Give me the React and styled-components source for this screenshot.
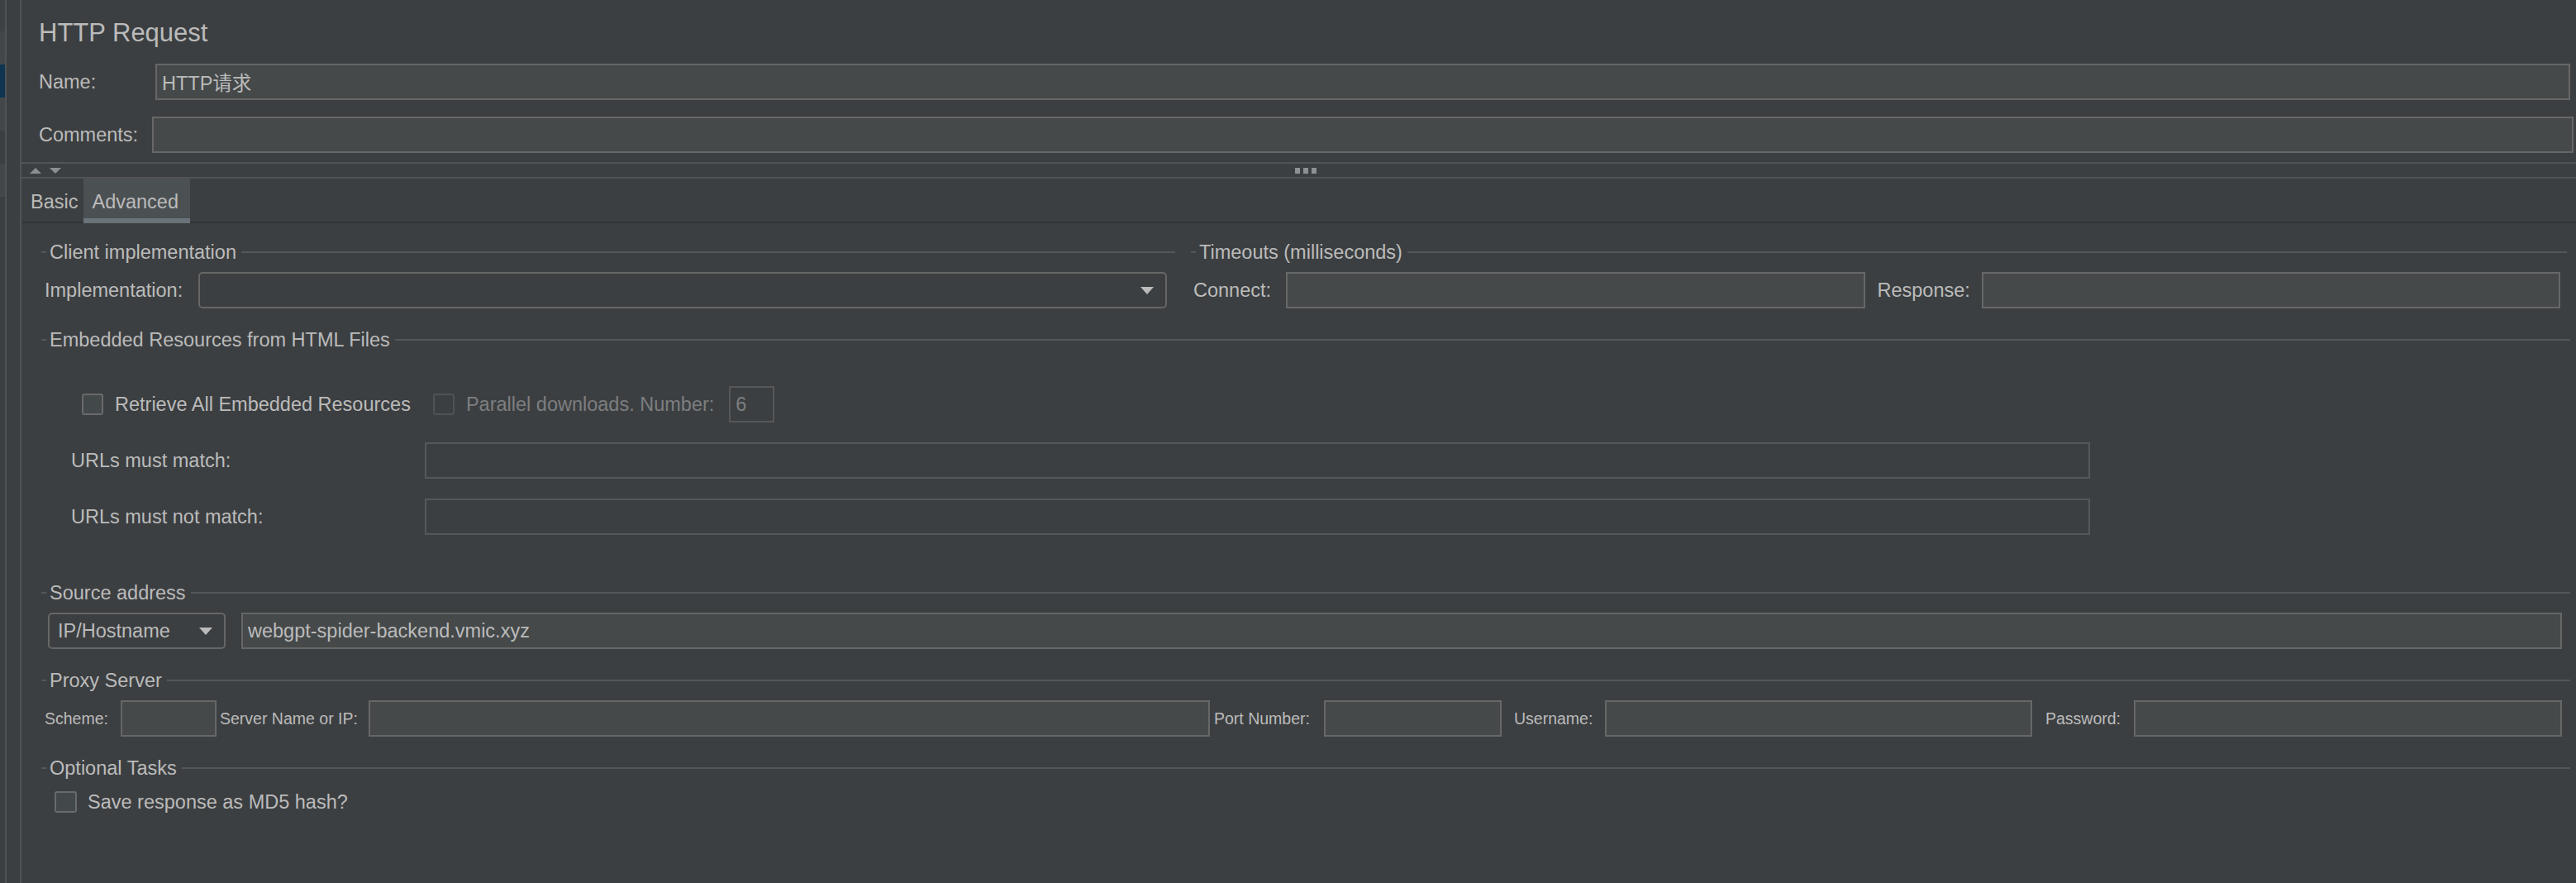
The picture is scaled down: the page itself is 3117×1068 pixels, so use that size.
import React from 'react';
import styled, { createGlobalStyle } from 'styled-components';

const GlobalStyle = createGlobalStyle`
  html, body {
    margin: 0;
    padding: 0;
    background: #3c3f41;
  }
  body {
    font-family: "Liberation Sans", Arial, "Noto Sans CJK SC", sans-serif;
    color: #bbbbbb;
  }
`;

const Frame = styled.div`
  display: flex;
  width: 100%;
  height: 1068px;
  overflow: hidden;
  background: #3c3f41;
`;

const TreeStrip = styled.div`
  width: 6px;
  display: flex;
  flex-direction: column;
  flex-shrink: 0;
`;

const TreeRow = styled.div`
  height: ${(p) => p.$h || 40}px;
  background: ${(p) => p.$tone};
`;

const StripLine = styled.div`
  width: 2px;
  background: #505254;
  flex-shrink: 0;
`;

const Gutter = styled.div`
  width: 16px;
  flex-shrink: 0;
`;

const Main = styled.div`
  flex: 1;
  display: flex;
  flex-direction: column;
  border-left: 2px solid #515355;
`;

const Header = styled.div`
  padding: 20px 0 0 21px;
`;

const Title = styled.div`
  font-size: 31px;
  line-height: 39px;
  color: #bbbbbb;
`;

const FieldRow = styled.div`
  display: flex;
  align-items: center;
  height: 44px;
  margin-top: ${(p) => p.$top}px;
  padding-left: 21px;
  padding-right: ${(p) => p.$right}px;
`;

const Label = styled.div`
  width: ${(p) => (p.$w ? `${p.$w}px` : 'auto')};
  margin-left: ${(p) => p.$ml || 0}px;
  flex-shrink: 0;
  font-size: ${(p) => (p.$small ? '19.5px' : '23.5px')};
  line-height: 44px;
  color: ${(p) => (p.$disabled ? '#7c7e80' : '#bbbbbb')};
  white-space: nowrap;
`;

const TextField = styled.div`
  box-sizing: border-box;
  height: 44px;
  flex: ${(p) => (p.$w ? 'none' : 1)};
  width: ${(p) => (p.$w ? `${p.$w}px` : 'auto')};
  margin-left: ${(p) => p.$ml || 0}px;
  display: flex;
  align-items: center;
  padding: 0 6px;
  font-size: 23.5px;
  color: ${(p) => (p.$disabled ? '#7c7e80' : '#bbbbbb')};
  background: ${(p) => (p.$disabled ? 'transparent' : '#45494a')};
  border: 2px solid ${(p) => (p.$disabled ? '#555759' : '#676767')};
  white-space: nowrap;
`;

const Combo = styled.div`
  box-sizing: border-box;
  height: 44px;
  flex: ${(p) => (p.$w ? 'none' : 1)};
  width: ${(p) => (p.$w ? `${p.$w}px` : 'auto')};
  display: flex;
  align-items: center;
  justify-content: space-between;
  padding: 0 14px 0 10px;
  border: 2px solid #666666;
  border-radius: 5px;
  font-size: 23.5px;
  color: #bbbbbb;
`;

const SplitBar = styled.div`
  margin-top: 11px;
  height: 16px;
  border-top: 2px solid #515355;
  border-bottom: 2px solid #515355;
  display: grid;
  grid-template-columns: 1fr auto 1fr;
  align-items: center;
`;

const SplitArrows = styled.div`
  display: flex;
  gap: 10px;
  padding-left: 10px;
`;

const SplitDots = styled.div`
  display: flex;
  gap: 4px;
  margin-left: 16px;
`;

const Dot = styled.span`
  width: 6px;
  height: 7px;
  background: #8e9193;
`;

const TabStrip = styled.div`
  height: 52px;
  display: flex;
  border-bottom: 2px solid #323436;
`;

const Tab = styled.div`
  box-sizing: border-box;
  height: 54px;
  padding: 4px ${(p) => (p.$active ? '14px' : '7px')} 0 ${(p) => (p.$active ? '10px' : '11px')};
  font-size: 23.5px;
  line-height: 48px;
  color: #bbbbbb;
  background: ${(p) => (p.$active ? '#4b5053' : 'transparent')};
  box-shadow: ${(p) => (p.$active ? 'inset 0 -6px 0 #6a7379' : 'none')};
`;

const Content = styled.div`
  padding: 0 7px 0 24px;
  display: flex;
  flex-direction: column;
`;

const GroupRow = styled.div`
  display: flex;
  gap: 19px;
  margin-top: ${(p) => p.$top}px;
`;

const Group = styled.div`
  display: flex;
  flex-direction: column;
  width: ${(p) => (p.$w ? `${p.$w}px` : 'auto')};
  flex: ${(p) => (p.$w ? 'none' : 1)};
  margin-top: ${(p) => p.$top || 0}px;
  margin-right: ${(p) => p.$mr || 0}px;
`;

const GroupHead = styled.div`
  display: flex;
  align-items: center;
  height: 24px;
`;

const Stub = styled.span`
  width: 6px;
  height: 2px;
  background: #545658;
`;

const GroupTitle = styled.span`
  padding: 0 6px 0 4px;
  font-size: 23.5px;
  line-height: 24px;
  color: #bbbbbb;
  white-space: nowrap;
`;

const Rule = styled.span`
  flex: 1;
  height: 2px;
  background: #545658;
`;

const GroupBody = styled.div`
  display: flex;
  align-items: center;
  height: ${(p) => p.$h || 44}px;
  margin-top: ${(p) => p.$top}px;
  padding-left: ${(p) => p.$left}px;
  padding-right: ${(p) => p.$right || 0}px;
`;

const Check = styled.span`
  box-sizing: border-box;
  width: ${(p) => p.$w || 26}px;
  height: 26px;
  flex-shrink: 0;
  margin-left: ${(p) => p.$ml || 0}px;
  border-radius: 3px;
  border: 2px solid ${(p) => (p.$disabled ? '#505254' : '#686a6c')};
  background: ${(p) => (p.$disabled ? 'transparent' : '#43494a')};
`;

const CheckLabel = styled(Label)`
  line-height: 26px;
`;

const Arrow = ({ up, color = '#8c8f91' }) => (
  <svg width="14" height="7" viewBox="0 0 14 7">
    {up ? (
      <polygon points="7,0 14,7 0,7" fill={color} />
    ) : (
      <polygon points="0,0 14,0 7,7" fill={color} />
    )}
  </svg>
);

const ComboArrow = () => (
  <svg width="16" height="9" viewBox="0 0 16 9">
    <polygon points="0,0 16,0 8,9" fill="#bbbbbb" />
  </svg>
);

const Section = ({ title, children, ...rest }) => (
  <Group {...rest}>
    <GroupHead>
      <Stub />
      <GroupTitle>{title}</GroupTitle>
      <Rule />
    </GroupHead>
    {children}
  </Group>
);

const treeRows = [
  [38, '#3e4143'],
  [40, '#44474a'],
  [40, '#0e3450'],
  [40, '#44474a'],
  [40, '#3c3f41'],
  [40, '#44474a'],
];

export default function App() {
  return (
    <>
      <GlobalStyle />
      <Frame>
        <TreeStrip>
          {treeRows.map(([h, tone], i) => (
            <TreeRow key={i} $h={h} $tone={tone} />
          ))}
        </TreeStrip>
        <StripLine />
        <Gutter />
        <Main>
          <Header>
            <Title>HTTP Request</Title>
          </Header>
          <FieldRow $top={18} $right={7}>
            <Label $w={141}>Name:</Label>
            <TextField>HTTP请求</TextField>
          </FieldRow>
          <FieldRow $top={20} $right={3}>
            <Label $w={137}>Comments:</Label>
            <TextField />
          </FieldRow>

          <SplitBar>
            <SplitArrows>
              <Arrow up />
              <Arrow />
            </SplitArrows>
            <SplitDots>
              <Dot />
              <Dot />
              <Dot />
            </SplitDots>
            <span />
          </SplitBar>

          <TabStrip>
            <Tab>Basic</Tab>
            <Tab $active>Advanced</Tab>
          </TabStrip>

          <Content>
            <GroupRow $top={23}>
              <Section title="Client implementation" $w={1372}>
                <GroupBody $top={12} $left={4} $right={10}>
                  <Label $w={186}>Implementation:</Label>
                  <Combo>
                    <span />
                    <ComboArrow />
                  </Combo>
                </GroupBody>
              </Section>
              <Section title="Timeouts (milliseconds)" $mr={4}>
                <GroupBody $top={12} $left={3} $right={8}>
                  <Label $w={112}>Connect:</Label>
                  <TextField />
                  <Label $w={126} $ml={15}>Response:</Label>
                  <TextField />
                </GroupBody>
              </Section>
            </GroupRow>

            <Section title="Embedded Resources from HTML Files" $top={26}>
              <GroupBody $top={44} $left={49}>
                <Check />
                <Label $ml={14}>Retrieve All Embedded Resources</Label>
                <Check $disabled $ml={27} />
                <Label $ml={14} $disabled>Parallel downloads. Number:</Label>
                <TextField $w={55} $ml={18} $disabled>6</TextField>
              </GroupBody>
              <GroupBody $top={24} $left={36}>
                <Label $w={428}>URLs must match:</Label>
                <TextField $w={2015} $disabled />
              </GroupBody>
              <GroupBody $top={24} $left={36}>
                <Label $w={428}>URLs must not match:</Label>
                <TextField $w={2015} $disabled />
              </GroupBody>
            </Section>

            <Section title="Source address" $top={58}>
              <GroupBody $top={12} $left={8} $right={10}>
                <Combo $w={215}>
                  <span>IP/Hostname</span>
                  <ComboArrow />
                </Combo>
                <TextField $ml={19}>webgpt-spider-backend.vmic.xyz</TextField>
              </GroupBody>
            </Section>

            <Section title="Proxy Server" $top={26}>
              <GroupBody $top={12} $left={4} $right={10}>
                <Label $small $w={92}>Scheme:</Label>
                <TextField $w={116} />
                <Label $small $w={180} $ml={4}>Server Name or IP:</Label>
                <TextField $w={1018} />
                <Label $small $w={133} $ml={5}>Port Number:</Label>
                <TextField $w={215} />
                <Label $small $w={110} $ml={15}>Username:</Label>
                <TextField $w={517} />
                <Label $small $w={107} $ml={16}>Password:</Label>
                <TextField />
              </GroupBody>
            </Section>

            <Section title="Optional Tasks" $top={26}>
              <GroupBody $top={16} $left={16} $h={26}>
                <Check $w={27} />
                <CheckLabel $ml={13}>Save response as MD5 hash?</CheckLabel>
              </GroupBody>
            </Section>
          </Content>
        </Main>
      </Frame>
    </>
  );
}
